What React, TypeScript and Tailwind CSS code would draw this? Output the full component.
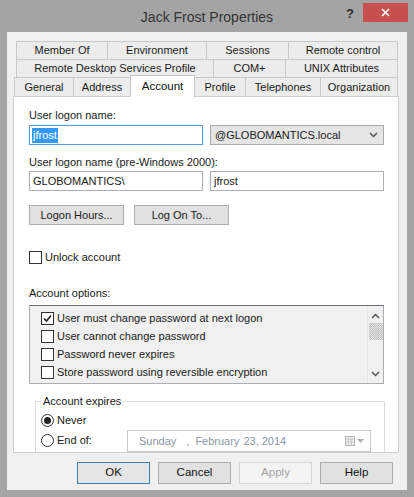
const font = { fontFamily: '"Liberation Sans", Arial, sans-serif' };

function Tab({ label, w, active }: { label: string; w: number; active?: boolean }) {
  if (active) {
    return (
      <div
        className="relative z-10 -ml-px mb-[-1px] flex h-[22px] items-start justify-center border border-b-0 border-[#c4c4c4] bg-white pt-[2px] text-[11.5px] text-[#111]"
        style={{ width: w }}
      >
        {label}
      </div>
    );
  }
  return (
    <div
      className="-ml-px flex h-full items-center justify-center border border-b-0 border-[#c9c9c9] bg-[#ececec] text-[11px] text-[#1a1a1a] first:ml-0"
      style={{ width: w }}
    >
      {label}
    </div>
  );
}

function Check({ on }: { on?: boolean }) {
  return (
    <div className="flex h-[13px] w-[13px] shrink-0 items-center justify-center border border-[#333] bg-white">
      {on && (
        <svg width="9" height="9" viewBox="0 0 9 9">
          <path d="M1 4.5 L3.5 7 L8 1.5" fill="none" stroke="#222" strokeWidth="1.6" />
        </svg>
      )}
    </div>
  );
}

function Radio({ on }: { on?: boolean }) {
  return (
    <div className="flex h-[13px] w-[13px] shrink-0 items-center justify-center rounded-full border border-[#333] bg-white">
      {on && <div className="h-[7px] w-[7px] rounded-full bg-[#222]" />}
    </div>
  );
}

function Btn({ label, kind }: { label: string; kind?: 'default' | 'disabled' }) {
  const cls =
    kind === 'default'
      ? 'border-[#3c7fb1] bg-[#e5e5e5] text-[#111]'
      : kind === 'disabled'
        ? 'border-[#d5d5d5] bg-[#f4f4f4] text-[#a3a3a3]'
        : 'border-[#adadad] bg-[#e1e1e1] text-[#111]';
  return (
    <div className={`flex h-[22px] w-[73px] items-center justify-center border text-[11.5px] ${cls}`}>
      {label}
    </div>
  );
}

function Chevron({ up }: { up?: boolean }) {
  return (
    <svg width="9" height="6" viewBox="0 0 9 6">
      <path d={up ? 'M1 5 L4.5 1.5 L8 5' : 'M1 1 L4.5 4.5 L8 1'} fill="none" stroke="#555" strokeWidth="1.5" />
    </svg>
  );
}

export default function App() {
  const options = [
    ['User must change password at next logon', true],
    ['User cannot change password', false],
    ['Password never expires', false],
    ['Store password using reversible encryption', false],
  ] as const;

  return (
    <div className="flex h-[497px] w-[414px] flex-col bg-[#a4a4a4]" style={font}>
      {/* title bar */}
      <div className="grid h-[32px] shrink-0 grid-cols-[1fr_auto_1fr]">
        <div />
        <div className="pt-[7px] text-[14px] text-[#333]">Jack Frost Properties</div>
        <div className="flex items-start justify-end gap-[9px] pr-[6px] pt-[3px]">
          <span className="pt-[1px] text-[13px] font-bold text-[#2c2c2c]">?</span>
          <div className="flex h-[19px] w-[45px] items-center justify-center bg-[#c7504f]">
            <svg width="9" height="9" viewBox="0 0 9 9">
              <path d="M1 1 L8 8 M8 1 L1 8" stroke="#fff" strokeWidth="1.6" />
            </svg>
          </div>
        </div>
      </div>

      {/* client area */}
      <div className="mx-[7px] flex h-[458px] flex-col bg-[#f0f0f0] px-[6px] pt-[9px]">
        <div className="ml-[3px] flex h-[18px] w-[382px]">
          <Tab label="Member Of" w={92} />
          <Tab label="Environment" w={100} />
          <Tab label="Sessions" w={83} />
          <Tab label="Remote control" w={110} />
        </div>
        <div className="ml-[3px] flex h-[18px] w-[382px]">
          <Tab label="Remote Desktop Services Profile" w={198} />
          <Tab label="COM+" w={73} />
          <Tab label="UNIX Attributes" w={113} />
        </div>
        <div className="ml-[1px] flex h-[19px] w-[385px] items-end">
          <Tab label="General" w={60} />
          <Tab label="Address" w={58} />
          <Tab label="Account" w={65} active />
          <Tab label="Profile" w={52} />
          <Tab label="Telephones" w={76} />
          <Tab label="Organization" w={78} />
        </div>

        {/* tab panel */}
        <div className="h-[357px] w-[386px] shrink-0 overflow-hidden border border-[#cfcfcf] bg-white pl-[15px] pt-[11px] text-[11px] text-[#1a1a1a]">
          <div className="leading-[15px]">User logon name:</div>
          <div className="mt-[2px] flex gap-[7px]">
            <div className="flex h-[20px] w-[174px] items-center border border-[#569de5] bg-white pl-[2px]">
              <span className="bg-[#3399ff] px-[1px] leading-[15px] text-white">jfrost</span>
            </div>
            <div className="flex h-[20px] w-[174px] items-center justify-between border border-[#acacac] bg-[#e5e5e5] pl-[4px] pr-[5px]">
              <span>@GLOBOMANTICS.local</span>
              <Chevron />
            </div>
          </div>

          <div className="mt-[10px] leading-[15px]">User logon name (pre-Windows 2000):</div>
          <div className="mt-[1px] flex gap-[7px]">
            <div className="flex h-[20px] w-[174px] items-center border border-[#abadb3] bg-white pl-[3px]">GLOBOMANTICS\</div>
            <div className="flex h-[20px] w-[174px] items-center border border-[#abadb3] bg-white pl-[3px]">jfrost</div>
          </div>

          <div className="mt-[14px] flex gap-[10px]">
            <div className="flex h-[20px] w-[95px] items-center justify-center border border-[#adadad] bg-[#e1e1e1]">Logon Hours...</div>
            <div className="flex h-[20px] w-[95px] items-center justify-center border border-[#adadad] bg-[#e1e1e1]">Log On To...</div>
          </div>

          <div className="mt-[25px] flex h-[15px] items-center gap-[3px]">
            <Check />
            <span>Unlock account</span>
          </div>

          <div className="mt-[21px] leading-[15px]">Account options:</div>
          <div className="mt-[4px] flex h-[79px] w-[355px] border border-[#abadb3] border-t-[#6f7379] bg-[#f0f0f0]">
            <div className="flex-1 pl-[11px] pt-[3px]">
              {options.map(([label, on]) => (
                <div key={label} className="flex h-[18px] items-center gap-[3px]">
                  <Check on={on} />
                  <span>{label}</span>
                </div>
              ))}
            </div>
            <div className="flex w-[16px] flex-col items-center border-l border-[#e6e6e6] bg-[#f0f0f0] pt-[7px]">
              <Chevron up />
              <div
                className="mt-[4px] h-[17px] w-[14px] bg-[#cdcdcd]"
                style={{ backgroundImage: 'repeating-conic-gradient(#c2c2c2 0 25%, #e0e0e0 0 50%)', backgroundSize: '2px 2px' }}
              />
              <div className="flex-1" />
              <div className="pb-[6px]">
                <Chevron />
              </div>
            </div>
          </div>

          <fieldset className="ml-[6px] mt-[10px] w-[350px] border border-[#dcdcdc] pb-[4px] pl-[5px]">
            <legend className="ml-[0px] px-[2px] leading-[15px]">Account expires</legend>
            <div className="flex h-[21px] items-center gap-[3px] pt-[2px]">
              <Radio on />
              <span>Never</span>
            </div>
            <div className="flex h-[21px] items-start">
              <div className="flex h-[21px] w-[86px] items-center gap-[3px]">
                <Radio />
                <span>End of:</span>
              </div>
              <div className="flex h-[22px] w-[244px] items-center border border-[#c8c8c8] bg-white pl-[11px] pr-[6px] text-[#8a96a3]">
                <span>Sunday</span>
                <span className="ml-[10px]">,</span>
                <span className="ml-[6px]">February</span>
                <span className="ml-[4px]">23, 2014</span>
                <div className="ml-auto flex items-center gap-[2px]">
                  <svg width="10" height="10" viewBox="0 0 10 10">
                    <rect x="0.5" y="0.5" width="9" height="9" fill="#eee" stroke="#b5b5b5" />
                    <path d="M0.5 3 H9.5 M3.5 3 V9.5 M6.5 3 V9.5 M0.5 6 H9.5" stroke="#c8c8c8" />
                  </svg>
                  <svg width="7" height="4" viewBox="0 0 7 4">
                    <path d="M0 0 L3.5 4 L7 0 Z" fill="#b0b0b0" />
                  </svg>
                </div>
              </div>
            </div>
          </fieldset>
        </div>

        {/* dialog buttons */}
        <div className="mt-[9px] flex justify-end gap-[8px] pr-[8px]">
          <Btn label="OK" kind="default" />
          <Btn label="Cancel" />
          <Btn label="Apply" kind="disabled" />
          <Btn label="Help" />
        </div>
      </div>
    </div>
  );
}
